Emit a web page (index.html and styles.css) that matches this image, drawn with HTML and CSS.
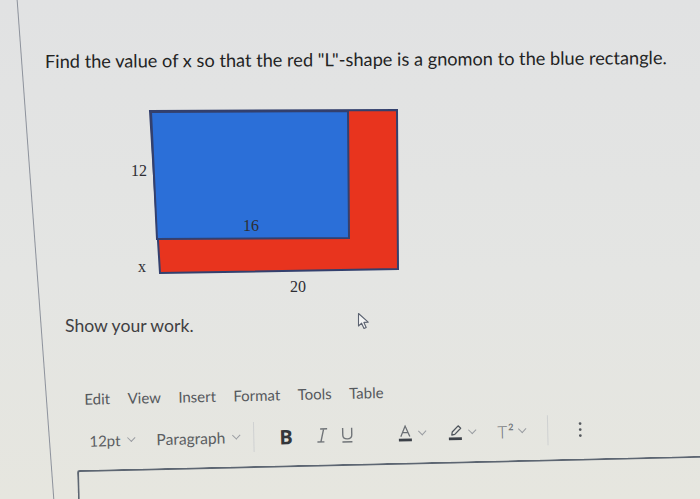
FILE: index.html
```html
<!DOCTYPE html>
<html lang="en">
<head>
<meta charset="utf-8">
<title>Gnomon question</title>
<link rel="stylesheet" href="styles.css">
</head>
<body>
<div class="page">
  <p class="question">Find the value of x so that the red "L"-shape is a gnomon to the blue rectangle.</p>

  <div class="figure">
    <svg class="diagram" width="300" height="200" viewBox="100 100 300 200" aria-label="Blue rectangle with red L-shaped gnomon">
      <polygon points="150,111 397,110 398,269 160,273" fill="#e8341e" stroke="#33406e" stroke-width="2"/>
      <polygon points="151,112 348,111 349,238 157,239" fill="#2b6fd8" stroke="#33406e" stroke-width="2"/>
      <text x="139" y="176" class="lbl">12</text>
      <text x="251" y="231" class="lbl">16</text>
      <text x="142" y="272" class="lbl">x</text>
      <text x="298" y="292" class="lbl">20</text>
    </svg>
  </div>

  <div class="prompt">
    <p class="prompt-text">Show your work.</p>
    <svg class="cursor" width="14" height="18" viewBox="0 0 14 18">
      <path d="M1.5 1.5 L1.5 14 L4.6 11.2 L7 16.5 L9.2 15.5 L6.9 10.4 L11.2 10.2 Z" fill="#f4f5f5" stroke="#5b6270" stroke-width="1.1" stroke-linejoin="round"/>
    </svg>
  </div>

  <div class="editor">
    <nav class="menubar">
      <span>Edit</span><span>View</span><span>Insert</span><span>Format</span><span>Tools</span><span>Table</span>
    </nav>
    <div class="toolbar">
      <span class="tb-text">12pt <i class="chev"></i></span>
      <span class="tb-text para">Paragraph <i class="chev"></i></span>
      <span class="sep"></span>
      <span class="tb-bold">B</span>
      <svg class="ico" width="16" height="18" viewBox="0 0 16 18"><path d="M6 2.5 H13 M9.5 2.5 L6.5 15.5 M3 15.5 H10" stroke="#707478" stroke-width="1.4" fill="none"/></svg>
      <svg class="ico" width="16" height="18" viewBox="0 0 16 18"><path d="M3.5 2 V9 Q3.5 13 8 13 Q12.5 13 12.5 9 V2 M3 16 H13" stroke="#707478" stroke-width="1.4" fill="none"/></svg>
      <span class="ico-group">
        <svg width="16" height="18" viewBox="0 0 16 18"><path d="M3.5 12 L8 1.5 L12.5 12 M5.3 8 H10.7" stroke="#6b6f74" stroke-width="1.3" fill="none"/><rect x="1.5" y="14" width="13" height="2.8" fill="#3c4148"/></svg>
        <i class="chev"></i>
      </span>
      <span class="ico-group">
        <svg width="16" height="18" viewBox="0 0 16 18"><path d="M4.5 11.5 L5 8.5 L11 2.5 L13.5 5 L7.5 11 Z M4.5 11.5 L7.5 11" stroke="#50565d" stroke-width="1.3" fill="none" stroke-linejoin="round"/><rect x="1.5" y="14" width="13" height="2.8" fill="#3c4148"/></svg>
        <i class="chev"></i>
      </span>
      <span class="ico-group">
        <span class="tsup">T<sup>2</sup></span>
        <i class="chev"></i>
      </span>
      <span class="sep sep2"></span>
      <svg class="more" width="6" height="18" viewBox="0 0 6 18"><circle cx="3" cy="3" r="1.4" fill="#55595e"/><circle cx="3" cy="9" r="1.4" fill="#55595e"/><circle cx="3" cy="15" r="1.4" fill="#55595e"/></svg>
    </div>
    <div class="textbox"></div>
  </div>
</div>
</body>
</html>
```

FILE: styles.css
```css
html, body {
  margin: 0;
  padding: 0;
}

body {
  width: 700px;
  height: 499px;
  overflow: hidden;
  background: linear-gradient(180deg, #e1e2e3 0%, #e4e5e3 55%, #e6e6df 100%);
  font-family: "Lato", "Liberation Sans", sans-serif;
  color: #2b2b2b;
}

.page {
  position: relative;
  height: 499px;
  overflow: hidden;
}

.page::before {
  content: "";
  position: absolute;
  left: 35px;
  top: -4px;
  width: 1px;
  height: 508px;
  background: #8d929c;
  transform: rotate(-4.2deg);
}

.question {
  margin: 0;
  padding: 48px 0 0 45px;
  font-size: 18.2px;
  line-height: 26px;
  white-space: nowrap;
  color: #232323;
  transform: rotate(-0.35deg);
  transform-origin: 45px 61px;
}

.figure {
  margin-top: 26px;
  padding-left: 100px;
  height: 200px;
}

.diagram {
  display: block;
}

.lbl {
  font-family: "Liberation Serif", "Times New Roman", serif;
  font-size: 16px;
  fill: #2e2e33;
  text-anchor: middle;
}

.prompt {
  display: flex;
  align-items: flex-start;
  margin-top: 16px;
  padding-left: 65px;
  height: 20px;
}

.prompt-text {
  margin: 0;
  font-size: 17.6px;
  line-height: 20px;
  color: #3f4042;
}

.cursor {
  display: block;
  margin-left: 163px;
  margin-top: -4px;
}

.editor {
  margin-top: 52px;
  padding-left: 77px;
  transform: rotate(-1.3deg);
  transform-origin: 77px 82px;
}

.menubar {
  display: flex;
  gap: 17.4px;
  padding-left: 9px;
  height: 22px;
  align-items: center;
  font-size: 15px;
  color: #56595d;
}

.toolbar {
  display: flex;
  align-items: center;
  height: 36px;
  margin-top: 13px;
  padding-left: 13px;
  font-size: 15px;
  color: #5b5e62;
}

.tb-text {
  display: flex;
  align-items: center;
  gap: 8px;
}

.para {
  margin-left: 22px;
  font-size: 15.6px;
}

.chev {
  display: inline-block;
  width: 5px;
  height: 5px;
  border-right: 1.2px solid #9a9da2;
  border-bottom: 1.2px solid #9a9da2;
  transform: rotate(45deg);
  margin-top: -4px;
}

.sep {
  width: 1px;
  height: 30px;
  background: #cfd1d1;
  margin-left: 14px;
}

.tb-bold {
  margin-left: 25px;
  font-family: "Open Sans", "Liberation Sans", sans-serif;
  font-weight: 700;
  font-size: 20px;
  color: #34373b;
  width: 16px;
}

.ico {
  display: block;
  margin-left: 19px;
}

.ico + .ico {
  margin-left: 9px;
}

.ico-group {
  display: flex;
  align-items: center;
  gap: 6px;
  margin-left: 42px;
}

.ico-group + .ico-group {
  margin-left: 22px;
}

.ico-group svg {
  display: block;
}

.tsup {
  font-size: 17px;
  color: #707478;
  line-height: 1;
  font-weight: 300;
}

.tsup sup {
  font-size: 9px;
  font-weight: 700;
  vertical-align: 8px;
  margin-left: 1px;
}

.sep2 {
  margin-left: 22px;
}

.more {
  display: block;
  margin-left: 29px;
}

.textbox {
  margin-top: 11px;
  height: 60px;
  width: 640px;
  border-top: 2px solid #5d6672;
  border-left: 2px solid #5d6672;
  border-top-left-radius: 3px;
}
```
